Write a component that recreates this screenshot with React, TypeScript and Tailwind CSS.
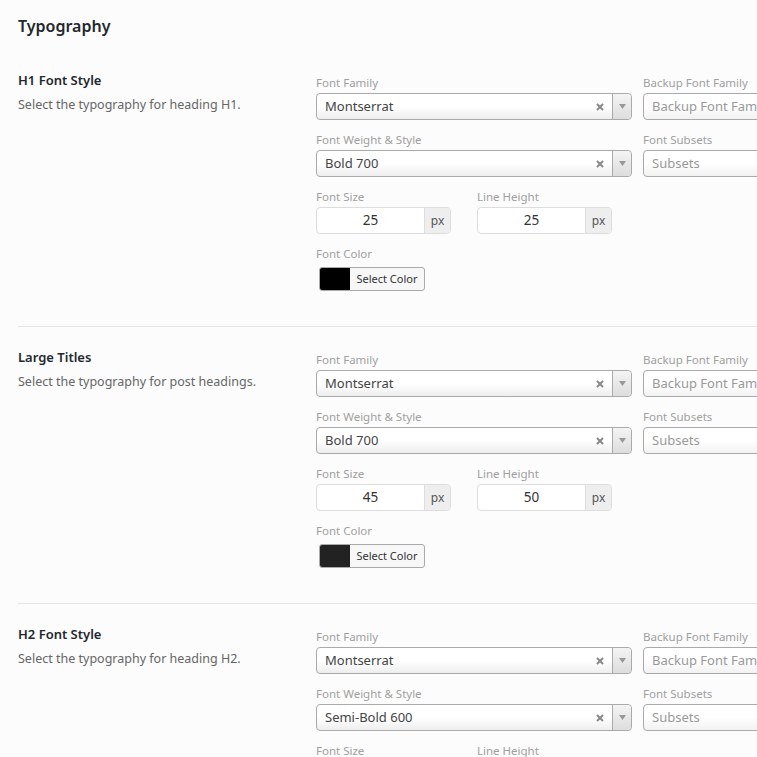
import { ReactNode } from "react";

interface Section {
  title: string;
  desc: string;
  family: string;
  weight: string;
  size: string;
  lineHeight: string;
  color: string;
}

const sections: Section[] = [
  {
    title: "H1 Font Style",
    desc: "Select the typography for heading H1.",
    family: "Montserrat",
    weight: "Bold 700",
    size: "25",
    lineHeight: "25",
    color: "#000000",
  },
  {
    title: "Large Titles",
    desc: "Select the typography for post headings.",
    family: "Montserrat",
    weight: "Bold 700",
    size: "45",
    lineHeight: "50",
    color: "#222222",
  },
  {
    title: "H2 Font Style",
    desc: "Select the typography for heading H2.",
    family: "Montserrat",
    weight: "Semi-Bold 600",
    size: "32",
    lineHeight: "36",
    color: "#000000",
  },
];

const Field = ({ label, children }: { label: string; children: ReactNode }) => (
  <div>
    <div className="mb-[1px] text-[11.5px] leading-[18px] text-[#a0a0a0]">{label}</div>
    {children}
  </div>
);

const Select = ({ value }: { value: string }) => (
  <div className="flex h-[27px] w-[316px] items-stretch rounded-[4px] border border-[#aaaaaa] bg-gradient-to-b from-white from-50% to-[#eeeeee]">
    <div className="flex-1 pl-[8px] text-[13px] leading-[25px] text-[#444444]">{value}</div>
    <div className="flex w-[24px] items-center justify-center">
      <svg width="8" height="8" viewBox="0 0 8 8">
        <path d="M1 1 L7 7 M7 1 L1 7" stroke="#888888" strokeWidth="2" />
      </svg>
    </div>
    <div className="flex w-[19px] items-center justify-center rounded-r-[4px] border-l border-[#aaaaaa] bg-gradient-to-b from-[#f4f4f4] to-[#dddddd]">
      <svg width="7" height="5" viewBox="0 0 7 5">
        <path d="M0 0 L7 0 L3.5 5 Z" fill="#999999" />
      </svg>
    </div>
  </div>
);

const Placeholder = ({ text }: { text: string }) => (
  <div className="h-[27px] w-[200px] overflow-hidden whitespace-nowrap rounded-[4px] border border-[#aaaaaa] bg-gradient-to-b from-white from-50% to-[#f2f2f2] pl-[8px] text-[13px] leading-[25px] text-[#999999]">
    {text}
  </div>
);

const PxInput = ({ value }: { value: string }) => (
  <div className="flex h-[27px] w-[135px] rounded-[4px] border border-[#dddddd] bg-white">
    <div className="flex-1 text-center text-[13.5px] leading-[25px] text-[#333333]">{value}</div>
    <div className="w-[26px] rounded-r-[4px] border-l border-[#dddddd] bg-[#eeeeee] text-center text-[12px] leading-[25px] text-[#555555]">px</div>
  </div>
);

const ColorButton = ({ color }: { color: string }) => (
  <div className="ml-[3px] mt-[4px] flex h-[24px] w-[106px] overflow-hidden rounded-[3px] border border-[#aaaaaa] bg-[#f7f7f7]">
    <div className="w-[30px]" style={{ backgroundColor: color }} />
    <div className="flex-1 text-center text-[11px] leading-[22px] text-[#333333]">Select Color</div>
  </div>
);

const TypographySection = ({ s }: { s: Section }) => (
  <div className="flex border-b border-[#e5e5e5] pt-[21px] pb-[35px]">
    <div className="w-[298px] shrink-0">
      <div className="text-[13px] leading-[18px] font-semibold text-[#23282d]">{s.title}</div>
      <div className="mt-[7px] text-[12.5px] leading-[18px] text-[#666666]">{s.desc}</div>
    </div>
    <div className="flex gap-[11px] pt-[3px]">
      <div className="flex w-[316px] flex-col gap-[11px]">
        <Field label="Font Family">
          <Select value={s.family} />
        </Field>
        <Field label="Font Weight & Style">
          <Select value={s.weight} />
        </Field>
        <div className="flex gap-[26px]">
          <Field label="Font Size">
            <PxInput value={s.size} />
          </Field>
          <Field label="Line Height">
            <PxInput value={s.lineHeight} />
          </Field>
        </div>
        <Field label="Font Color">
          <ColorButton color={s.color} />
        </Field>
      </div>
      <div className="flex flex-col gap-[11px]">
        <Field label="Backup Font Family">
          <Placeholder text="Backup Font Family" />
        </Field>
        <Field label="Font Subsets">
          <Placeholder text="Subsets" />
        </Field>
      </div>
    </div>
  </div>
);

export default function App() {
  return (
    <div
      className="h-[757px] w-[757px] overflow-hidden bg-[#fcfcfc] pl-[18px]"
      style={{ fontFamily: '"Noto Sans", "Open Sans", sans-serif' }}
    >
      <h2 className="pt-[14px] text-[16px] leading-[24px] font-semibold text-[#23282d]">Typography</h2>
      <div className="mt-[12px]">
        {sections.map((s) => (
          <TypographySection key={s.title} s={s} />
        ))}
      </div>
    </div>
  );
}
